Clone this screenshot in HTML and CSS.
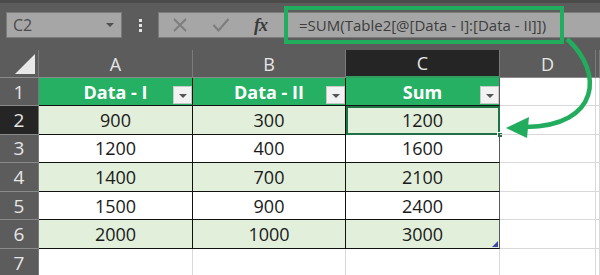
FILE: index.html
```html
<!DOCTYPE html>
<html lang="en">
<head>
  <meta charset="UTF-8">
  <title>Sum with structured references</title>
  <link rel="stylesheet" href="styles.css">
</head>
<body>
  <div class="ribbon">
    <div class="name-box">
      <span>C2</span>
      <span class="caret"></span>
    </div>
    <div class="dots"><i></i><i></i><i></i></div>
    <div class="formula-bar">
      <div class="fx-icons">
        <svg class="icon" width="16" height="16" viewBox="0 0 16 16">
          <path d="M2 2 L14 14 M14 2 L2 14" stroke="#7c7c7c" stroke-width="1.8" fill="none"/>
        </svg>
        <svg class="icon" width="18" height="16" viewBox="0 0 18 16">
          <path d="M1.5 8 L6.5 13.5 L16.5 2" stroke="#7c7c7c" stroke-width="2" fill="none"/>
        </svg>
        <span class="fx">fx</span>
      </div>
      <div class="formula">=SUM(Table2[@[Data - I]:[Data - II]])</div>
    </div>
  </div>

  <div class="sheet">
    <div class="row col-heads">
      <div class="corner"><span class="tri"></span></div>
      <div class="col-head">A</div>
      <div class="col-head">B</div>
      <div class="col-head active">C</div>
      <div class="col-head">D</div>
      <div class="col-head"></div>
    </div>

    <div class="row">
      <div class="row-head">1</div>
      <div class="cell th">Data - I<span class="filter"></span></div>
      <div class="cell th">Data - II<span class="filter"></span></div>
      <div class="cell th last">Sum<span class="filter"></span></div>
      <div class="cell grid"></div>
      <div class="cell grid"></div>
    </div>

    <div class="row band">
      <div class="row-head active">2</div>
      <div class="cell td">900</div>
      <div class="cell td">300</div>
      <div class="cell td last selected">1200<span class="handle"></span></div>
      <div class="cell grid"></div>
      <div class="cell grid"></div>
    </div>

    <div class="row">
      <div class="row-head">3</div>
      <div class="cell td">1200</div>
      <div class="cell td">400</div>
      <div class="cell td last">1600</div>
      <div class="cell grid"></div>
      <div class="cell grid"></div>
    </div>

    <div class="row band">
      <div class="row-head">4</div>
      <div class="cell td">1400</div>
      <div class="cell td">700</div>
      <div class="cell td last">2100</div>
      <div class="cell grid"></div>
      <div class="cell grid"></div>
    </div>

    <div class="row">
      <div class="row-head">5</div>
      <div class="cell td">1500</div>
      <div class="cell td">900</div>
      <div class="cell td last">2400</div>
      <div class="cell grid"></div>
      <div class="cell grid"></div>
    </div>

    <div class="row band">
      <div class="row-head">6</div>
      <div class="cell td">2000</div>
      <div class="cell td">1000</div>
      <div class="cell td last">3000<span class="resize"></span></div>
      <div class="cell grid"></div>
      <div class="cell grid"></div>
    </div>

    <div class="row">
      <div class="row-head">7</div>
      <div class="cell grid"></div>
      <div class="cell grid"></div>
      <div class="cell grid"></div>
      <div class="cell grid"></div>
      <div class="cell grid"></div>
    </div>
  </div>

  <svg class="arrow" width="600" height="275" viewBox="0 0 600 275">
    <path d="M567 39 C 604 72, 600 126, 526 127" stroke="#22ad5e" stroke-width="4.5" fill="none"/>
    <polygon points="506,128 529,117 527,138" fill="#22ad5e"/>
  </svg>
</body>
</html>
```

FILE: styles.css
```css
* {
  margin: 0;
  padding: 0;
  box-sizing: border-box;
}

body {
  width: 600px;
  height: 275px;
  overflow: hidden;
  position: relative;
  background-color: #fff;
  font-family: "Open Sans", Arial, sans-serif;
}

/* formula bar area */
.ribbon {
  height: 50px;
  background-color: #5c5c5c;
  border-top: 3px solid #4b4b4b;
  padding-top: 9px;
  display: flex;
  align-items: flex-start;
}

.name-box {
  margin-left: 6px;
  width: 116px;
  height: 26px;
  background-color: #a6a6a6;
  border: 1px solid #7b7b7b;
  display: flex;
  align-items: center;
  justify-content: space-between;
  padding: 0 7px 0 6px;
  font-size: 16px;
  color: #4a4a4a;
}

.caret {
  width: 0;
  height: 0;
  border-left: 4px solid transparent;
  border-right: 4px solid transparent;
  border-top: 4px solid #4f4f4f;
}

.dots {
  width: 36px;
  height: 26px;
  display: flex;
  flex-direction: column;
  align-items: center;
  justify-content: center;
  gap: 2px;
}

.dots i {
  display: block;
  width: 3px;
  height: 3px;
  background-color: #e2e2e2;
}

.formula-bar {
  flex: 1;
  height: 26px;
  background-color: #a6a6a6;
  border: 1px solid #7b7b7b;
  border-right: none;
  display: flex;
  align-items: center;
}

.fx-icons {
  width: 124px;
  display: flex;
  align-items: center;
  padding-left: 13px;
}

.fx-icons .icon {
  margin-right: 24px;
}

.fx {
  font-family: "Liberation Serif", serif;
  font-style: italic;
  font-weight: bold;
  font-size: 18px;
  color: #3a3a3a;
  letter-spacing: -1px;
}

.formula {
  margin-left: 8px;
  width: 266px;
  height: 24px;
  line-height: 24px;
  padding-left: 8px;
  outline: 4px solid #22ad5e;
  outline-offset: 3px;
  font-size: 15px;
  color: #3d3d3d;
  white-space: nowrap;
}

/* grid */
.row {
  display: grid;
  grid-template-columns: 39px 154px 153px 154px 96px 1fr;
  height: 28.6px;
}

.col-heads {
  height: 28px;
  background-color: #5c5c5c;
}

.corner {
  border-right: 1px solid #7a7a7a;
  border-bottom: 1px solid #8a8a8a;
  position: relative;
}

.tri {
  position: absolute;
  right: 3px;
  bottom: 3px;
  width: 0;
  height: 0;
  border-left: 20px solid transparent;
  border-bottom: 20px solid #e8e8e8;
}

.col-head {
  border-right: 1px solid #7a7a7a;
  border-bottom: 1px solid #8a8a8a;
  display: flex;
  align-items: center;
  justify-content: center;
  font-size: 18px;
  color: #e6e6e6;
}

.col-head.active {
  background-color: #252525;
  border-bottom: 2px solid #2f9e60;
}

.row-head {
  background-color: #5c5c5c;
  border-right: 1px solid #7a7a7a;
  border-bottom: 1px solid #8a8a8a;
  display: flex;
  align-items: center;
  justify-content: center;
  font-size: 19px;
  color: #e6e6e6;
}

.row-head.active {
  background-color: #252525;
}

.row:nth-child(2) {
  height: 28px;
}

.cell {
  position: relative;
  display: flex;
  align-items: center;
  justify-content: center;
  font-size: 18px;
  color: #1a1a1a;
  border-right: 1px solid #111;
  border-bottom: 1px solid #111;
}

.cell.last {
  border-right-color: #5a5a5a;
}

.cell.grid {
  border-right: 1px solid #d9d9d9;
  border-bottom: 1px solid #d9d9d9;
}

.th {
  background-color: #26b064;
  color: #fff;
  font-weight: bold;
}

.band .td {
  background-color: #e2efda;
}

.filter {
  position: absolute;
  right: 0;
  top: 8px;
  width: 19px;
  height: 18px;
  background-color: #f2f2f2;
  border: 1px solid #c9c9c9;
}

.filter::after {
  content: "";
  position: absolute;
  left: 5px;
  top: 7px;
  border-left: 4px solid transparent;
  border-right: 4px solid transparent;
  border-top: 4px solid #555;
}

.selected {
  outline: 2px solid #1f7246;
  outline-offset: -2px;
}

.handle {
  position: absolute;
  right: -4px;
  bottom: -4px;
  width: 6px;
  height: 6px;
  background-color: #1f7246;
  border: 1px solid #fff;
}

.resize {
  position: absolute;
  right: 1px;
  bottom: 1px;
  width: 0;
  height: 0;
  border-left: 6px solid transparent;
  border-bottom: 6px solid #3b4aa6;
}

.arrow {
  position: absolute;
  left: 0;
  top: 0;
  pointer-events: none;
}
```
